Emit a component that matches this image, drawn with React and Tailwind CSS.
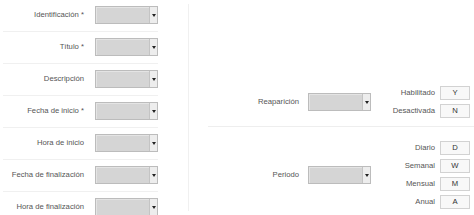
import React from 'react';

const leftFields = [
  'Identificación *',
  'Título *',
  'Descripción',
  'Fecha de inicio *',
  'Hora de inicio',
  'Fecha de finalización',
  'Hora de finalización',
];

function FakeSelect() {
  return (
    <div className="flex h-[18px] w-[63px] shrink-0 border border-[#bcbcbc] bg-[#d5d5d5] shadow-[inset_1px_1px_0_#e4e4e4]">
      <div className="flex-1" />
      <div className="flex w-[8px] items-center justify-center border-l border-[#c4c4c4] bg-[#ededed]">
        <div className="h-0 w-0 border-x-[2px] border-t-[3px] border-x-transparent border-t-[#222]" />
      </div>
    </div>
  );
}

function OptionGroup({ items }) {
  return (
    <div className="flex flex-1 flex-col items-end gap-[4px] pr-[4px]">
      {items.map(([label, key]) => (
        <div key={key} className="flex items-center gap-[5px]">
          <span className="text-[#555]">{label}</span>
          <div className="flex h-[14px] w-[30px] items-center justify-center border border-[#d2d2d2] bg-[#f8f8f8] text-[#333]">
            {key}
          </div>
        </div>
      ))}
    </div>
  );
}

export default function App() {
  return (
    <div className="flex h-[215px] w-[474px] overflow-hidden bg-white text-[7.7px] font-['Liberation_Sans',Arial,sans-serif]">
      {/* Left form column */}
      <div className="w-[188px] shrink-0">
        {leftFields.map(label => (
          <div key={label} className="ml-[3px] flex h-[32px] w-[155px] items-center border-b border-[#f0f0f0] pb-[1px]">
            <span className="w-[81px] text-right text-[#555]">{label}</span>
            <div className="ml-[11px]">
              <FakeSelect />
            </div>
          </div>
        ))}
      </div>

      {/* Right panel */}
      <div className="my-[4px] flex-1 border-l border-[#f0f0f0] pl-[19px]">
        <div className="flex items-center border-b border-[#eeeeee] pt-[82px] pb-[8px]">
          <span className="w-[91px] text-right text-[#555]">Reaparición</span>
          <div className="ml-[9px]">
            <FakeSelect />
          </div>
          <OptionGroup items={[['Habilitado', 'Y'], ['Desactivada', 'N']]} />
        </div>
        <div className="flex items-center pt-[14px]">
          <span className="w-[91px] text-right text-[#555]">Periodo</span>
          <div className="ml-[9px]">
            <FakeSelect />
          </div>
          <OptionGroup items={[['Diario', 'D'], ['Semanal', 'W'], ['Mensual', 'M'], ['Anual', 'A']]} />
        </div>
      </div>
    </div>
  );
}
